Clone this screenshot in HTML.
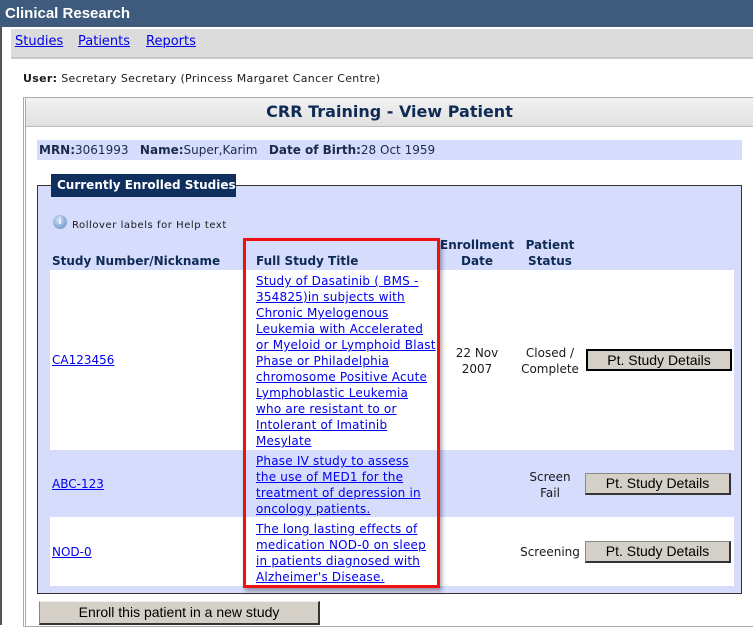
<!DOCTYPE html>
<html><head><style>
*{margin:0;padding:0;box-sizing:border-box}
body{width:753px;height:625px;overflow:hidden;background:#fff;font-family:"DejaVu Sans",Verdana,sans-serif;font-size:12px;color:#1a1a1a;position:relative}
.a{position:absolute}
a{color:#0000ee;text-decoration:underline}
.hd{color:#0f2a55;font-weight:bold;font-size:12px}
.btn{position:absolute;background:#d4d0c8;font-family:"Liberation Sans",Arial,sans-serif;font-size:14px;color:#000;text-align:center;border:1px solid #888;border-right:2px solid #333;border-bottom:2px solid #333}
.t{position:absolute;left:256px;line-height:16px;font-size:12px;letter-spacing:0.2px}
</style></head><body>
<div class="a" style="left:0;top:0;width:753px;height:27px;background:#3e5a7d"></div>
<div class="a" style="left:5px;top:5px;color:#fff;font-weight:bold;font-size:15px;font-family:'Liberation Sans',Arial,sans-serif">Clinical Research</div>
<div class="a" style="left:0;top:27px;width:2px;height:598px;background:#555"></div>
<div class="a" style="left:11px;top:29px;width:742px;height:30px;background:#dcdcdc;border-bottom:2px solid #c8c8c8"></div>
<div class="a" style="left:15px;top:34px;font-size:13px"><a>Studies</a></div>
<div class="a" style="left:78px;top:34px;font-size:13px"><a>Patients</a></div>
<div class="a" style="left:146px;top:34px;font-size:13px"><a>Reports</a></div>
<div class="a" style="left:23px;top:72px;font-size:11px;letter-spacing:0.32px"><b>User:</b> Secretary Secretary (Princess Margaret Cancer Centre)</div>
<div class="a" style="left:23px;top:97px;width:732px;height:530px;border:1px solid #aaa;border-left:3px double #aaa;background:#fff"></div>
<div class="a" style="left:26px;top:98px;width:727px;height:29px;background:linear-gradient(#f2f2f2,#e0e0e0);border-bottom:1px solid #bbb"></div>
<div class="a" style="left:26px;top:102px;width:727px;text-align:center;font-size:16px;font-weight:bold;color:#0f2a55">CRR Training - View Patient</div>
<div class="a" style="left:37px;top:140px;width:705px;height:20px;background:#d5dcfc"></div>
<div class="a" style="left:39px;top:143px;font-size:12px;color:#1a2a4a"><b>MRN:</b>3061993&nbsp;&nbsp; <b>Name:</b>Super,Karim&nbsp;&nbsp; <b>Date of Birth:</b>28 Oct 1959</div>
<div class="a" style="left:37px;top:185px;width:705px;height:409px;background:#d5dcfc;border:1px solid #333"></div>
<div class="a" style="left:51px;top:174px;width:185px;height:23px;background:#0f2f5f;color:#fff;font-weight:bold;font-size:12px;line-height:23px;padding-left:6px">Currently Enrolled Studies</div>
<div class="a" style="left:53px;top:215px;width:14px;height:14px;border-radius:50%;background:radial-gradient(circle at 40% 35%,#cfe0f5,#5a86c0);color:#fff;font-size:10px;font-weight:bold;text-align:center;line-height:14px;font-family:'Liberation Serif',serif">i</div>
<div class="a" style="left:72px;top:220px;font-size:10px;letter-spacing:0.55px">Rollover labels for Help text</div>
<div class="a hd" style="left:52px;top:254px">Study Number/Nickname</div>
<div class="a hd" style="left:256px;top:254px">Full Study Title</div>
<div class="a hd" style="left:440px;top:237px;width:74px;text-align:center;line-height:16px">Enrollment<br>Date</div>
<div class="a hd" style="left:520px;top:237px;width:60px;text-align:center;line-height:16px">Patient<br>Status</div>
<div class="a" style="left:50px;top:270px;width:684px;height:180px;background:#fff"></div>
<div class="a" style="left:50px;top:517px;width:684px;height:69px;background:#fff"></div>
<div class="a" style="left:52px;top:353px"><a>CA123456</a></div>
<div class="t" style="top:273px"><a>Study of Dasatinib ( BMS -<br>354825)in subjects with<br>Chronic Myelogenous<br>Leukemia with Accelerated<br>or Myeloid or Lymphoid Blast<br>Phase or Philadelphia<br>chromosome Positive Acute<br>Lymphoblastic Leukemia<br>who are resistant to or<br>Intolerant of Imatinib<br>Mesylate</a></div>
<div class="a" style="left:440px;top:345px;width:74px;text-align:center;line-height:16px">22 Nov<br>2007</div>
<div class="a" style="left:515px;top:345px;width:70px;text-align:center;line-height:16px">Closed /<br>Complete</div>
<div class="btn" style="left:586px;top:349px;width:146px;height:22px;border:2px solid #000;line-height:18px">Pt. Study Details</div>
<div class="a" style="left:52px;top:477px"><a>ABC-123</a></div>
<div class="t" style="top:453px"><a>Phase IV study to assess<br>the use of MED1 for the<br>treatment of depression in<br>oncology patients.</a></div>
<div class="a" style="left:515px;top:469px;width:70px;text-align:center;line-height:16px">Screen<br>Fail</div>
<div class="btn" style="left:585px;top:473px;width:146px;height:22px;line-height:19px">Pt. Study Details</div>
<div class="a" style="left:52px;top:545px"><a>NOD-0</a></div>
<div class="t" style="top:521px"><a>The long lasting effects of<br>medication NOD-0 on sleep<br>in patients diagnosed with<br>Alzheimer's Disease.</a></div>
<div class="a" style="left:515px;top:545px;width:70px;text-align:center">Screening</div>
<div class="btn" style="left:585px;top:541px;width:146px;height:22px;line-height:19px">Pt. Study Details</div>
<div class="a" style="left:243px;top:238px;width:197px;height:350px;border:3px solid #f01010;box-shadow:2px 3px 4px rgba(0,0,0,.35)"></div>
<div class="btn" style="left:39px;top:601px;width:281px;height:24px;line-height:20px;border-top:1px solid #eee">Enroll this patient in a new study</div>
</body></html>
